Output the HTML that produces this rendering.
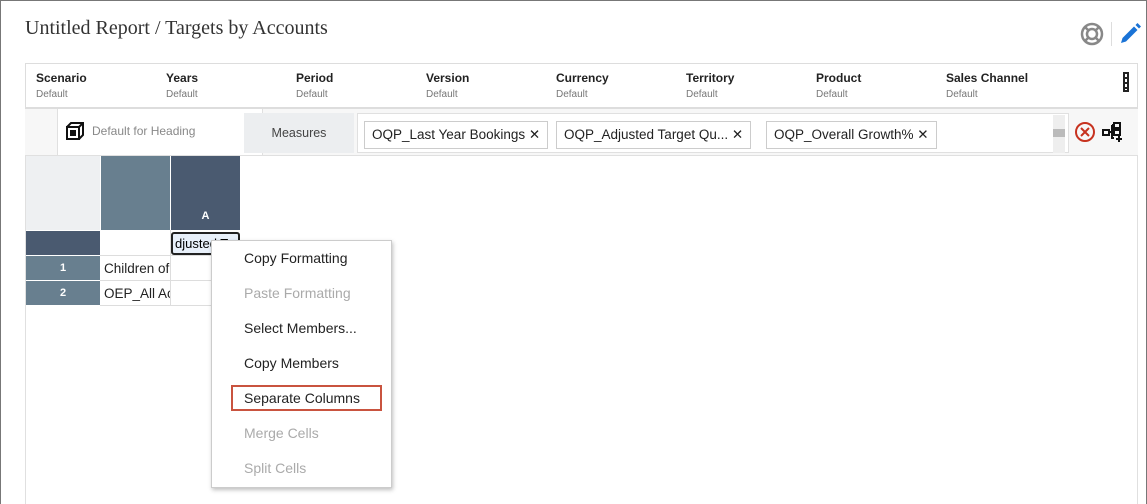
<!DOCTYPE html>
<html><head><style>
*{box-sizing:border-box;margin:0;padding:0}
body{width:1147px;height:504px;background:#fff;font-family:"Liberation Sans",sans-serif;position:relative;overflow:hidden}
.a{position:absolute}
.title{left:25px;top:17px;font-family:"Liberation Serif",serif;font-size:20px;color:#333}
.dims{left:25px;top:63px;width:1113px;height:46px;border:1px solid #ddd;border-bottom:2px solid #ddd}
.dim{position:absolute;top:7px;font-size:12px;font-weight:bold;color:#222}
.dim span{display:block;font-weight:normal;font-size:10px;color:#777;margin-top:4px}
.tb{left:25px;top:109px;width:1113px;height:47px;background:#f7f7f7;border-bottom:1px solid #e0e0e0}
.chip{position:absolute;top:12px;height:28px;border:1px solid #ccc;background:#fff;font-size:13.5px;color:#222;padding:5px 7px;white-space:nowrap}
.menu{left:211px;top:240px;width:181px;height:248px;background:#fff;border:1px solid #ccc;box-shadow:1px 2px 4px rgba(0,0,0,.25)}
.mi{position:absolute;left:32px;font-size:14px;color:#222}
.dis{color:#aaa}
</style></head><body>
<div class="a" style="left:0;top:0;width:1147px;height:504px;border:1px solid #777;border-bottom:none"></div>
<div class="a title">Untitled Report / Targets by Accounts</div>
<svg class="a" style="left:1080px;top:22px" width="24" height="24" viewBox="0 0 24 24"><circle cx="12" cy="12" r="10" fill="none" stroke="#888" stroke-width="2.5"/><circle cx="12" cy="12" r="5" fill="none" stroke="#888" stroke-width="2.5"/><path d="M5 5l4 4M19 5l-4 4M5 19l4-4M19 19l-4-4" stroke="#888" stroke-width="2.5"/></svg>
<div class="a" style="left:1111px;top:22px;width:1px;height:24px;background:#ddd"></div>
<svg class="a" style="left:1118px;top:22px" width="24" height="24" viewBox="0 0 24 24"><path d="M3 21l1.5-5L16 4.5l3.5 3.5L8 19.5z" fill="#1a73d6"/><path d="M17.5 3l2-2 3.5 3.5-2 2z" fill="#1a73d6"/></svg>
<div class="a dims">
<div class="dim" style="left:10px">Scenario<span>Default</span></div>
<div class="dim" style="left:140px">Years<span>Default</span></div>
<div class="dim" style="left:270px">Period<span>Default</span></div>
<div class="dim" style="left:400px">Version<span>Default</span></div>
<div class="dim" style="left:530px">Currency<span>Default</span></div>
<div class="dim" style="left:660px">Territory<span>Default</span></div>
<div class="dim" style="left:790px">Product<span>Default</span></div>
<div class="dim" style="left:920px">Sales Channel<span>Default</span></div>
<div class="a" style="left:1097px;top:8px;width:6px;height:20px;border:2px solid #222;background:repeating-linear-gradient(#fff 0 3px,#222 3px 5px)"></div>
</div>
<div class="a tb">
<div class="a" style="left:32px;top:0;width:206px;height:46px;background:#fff;border-left:1px solid #e0e0e0;border-right:1px solid #e0e0e0"></div>
<svg class="a" style="left:40px;top:12px" width="20" height="20" viewBox="0 0 20 20"><path d="M2 6h12v12H2zM2 6l4-4h12v12l-4 4M14 6l4-4" fill="none" stroke="#111" stroke-width="2"/><rect x="5" y="9" width="6" height="6" fill="#111"/></svg>
<div class="a" style="left:67px;top:15px;font-size:12px;color:#888">Default for Heading</div>
<div class="a" style="left:219px;top:4px;width:110px;height:40px;background:#eceef0;font-size:12.5px;color:#444;text-align:center;line-height:40px">Measures</div>
<div class="a" style="left:332px;top:4px;width:712px;height:40px;background:#fff;border:1px solid #e0e0e0"></div>
<div class="chip" style="left:339px">OQP_Last Year Bookings ✕</div>
<div class="chip" style="left:531px">OQP_Adjusted Target Qu... ✕</div>
<div class="chip" style="left:741px">OQP_Overall Growth% ✕</div>
<div class="a" style="left:1028px;top:6px;width:12px;height:38px;background:#eee"><div style="margin-top:14px;height:8px;background:#bbb"></div></div>
<svg class="a" style="left:1049px;top:12px" width="22" height="22" viewBox="0 0 22 22"><circle cx="11" cy="11" r="9" fill="none" stroke="#c7321f" stroke-width="2"/><path d="M7 7l8 8M15 7l-8 8" stroke="#c7321f" stroke-width="2"/></svg>
<svg class="a" style="left:1077px;top:12px" width="22" height="22" viewBox="0 0 22 22"><path d="M1 9h6v5H1zM12 2h6v5h-6zM12 9h6v5h-6zM7 11h5M10 4v13h2M10 4h2" fill="none" stroke="#111" stroke-width="2"/><path d="M17 15v6M14 18h6" stroke="#111" stroke-width="2"/></svg>
</div>
<div class="a" style="left:25px;top:156px;width:1113px;height:348px;border-left:1px solid #e0e0e0;border-right:1px solid #e0e0e0"></div>
<div class="a" style="left:26px;top:156px;width:74px;height:74px;background:#eef0f2"></div>
<div class="a" style="left:101px;top:156px;width:69px;height:74px;background:#687f8f"></div>
<div class="a" style="left:171px;top:156px;width:69px;height:74px;background:#4a5a70;color:#fff;font-size:11px;font-weight:bold;text-align:center;padding-top:54px">A</div>
<div class="a" style="left:26px;top:231px;width:74px;height:24px;background:#4a5a70"></div>
<div class="a" style="left:171px;top:232px;width:69px;height:23px;border:2px solid #222;border-radius:3px;background:#e8f0fa;font-size:13px;padding:2px;overflow:hidden;white-space:nowrap">djusted T</div>
<div class="a" style="left:26px;top:256px;width:74px;height:24px;background:#687f8f;color:#fff;font-size:11px;font-weight:bold;text-align:center;line-height:24px">1</div>
<div class="a" style="left:26px;top:281px;width:74px;height:24px;background:#687f8f;color:#fff;font-size:11px;font-weight:bold;text-align:center;line-height:24px">2</div>
<div class="a" style="left:100px;top:255px;width:140px;height:51px;border-top:1px solid #ddd;border-bottom:1px solid #ddd"></div>
<div class="a" style="left:170px;top:230px;width:1px;height:76px;background:#ddd"></div>
<div class="a" style="left:100px;top:280px;width:140px;height:1px;background:#ddd"></div>
<div class="a" style="left:104px;top:261px;font-size:13.5px;color:#222">Children of</div>
<div class="a" style="left:104px;top:286px;font-size:13.5px;color:#222;width:66px;overflow:hidden;white-space:nowrap">OEP_All Acc</div>
<div class="a menu">
<div class="mi" style="top:9px">Copy Formatting</div>
<div class="mi dis" style="top:44px">Paste Formatting</div>
<div class="mi" style="top:79px">Select Members...</div>
<div class="mi" style="top:114px">Copy Members</div>
<div class="a" style="left:19px;top:144px;width:151px;height:26px;border:2px solid #c9533f"></div>
<div class="mi" style="top:149px">Separate Columns</div>
<div class="mi dis" style="top:184px">Merge Cells</div>
<div class="mi dis" style="top:219px">Split Cells</div>
</div>
</body></html>
